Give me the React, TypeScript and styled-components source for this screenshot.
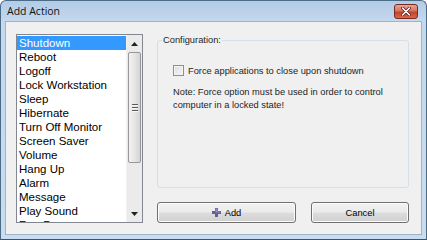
import styled, { createGlobalStyle } from "styled-components";

const GlobalStyle = createGlobalStyle`
  html, body { margin: 0; padding: 0; background: #ffffff; }
  body { font-family: "Liberation Sans", Arial, sans-serif; }
`;

const actions = [
  "Shutdown",
  "Reboot",
  "Logoff",
  "Lock Workstation",
  "Sleep",
  "Hibernate",
  "Turn Off Monitor",
  "Screen Saver",
  "Volume",
  "Hang Up",
  "Alarm",
  "Message",
  "Play Sound",
  "Run Program",
];

const Window = styled.div`
  box-sizing: border-box;
  width: 427px;
  height: 240px;
  display: flex;
  flex-direction: column;
  padding: 0 4px 4px 4px;
  border: 1px solid #4a6c86;
  border-bottom-color: #2e5a70;
  border-radius: 6px 6px 0 0;
  background: linear-gradient(to bottom, #b3cbe6 0px, #c4d8ee 20px, #c9dcf0 100%);
`;

const TitleBar = styled.div`
  height: 20px;
  display: flex;
  align-items: center;
  justify-content: space-between;
  padding-left: 2px;
`;

const Title = styled.span`
  font-family: "Open Sans", "Noto Sans", sans-serif;
  font-size: 10.5px;
  color: #111;
`;

const CloseButton = styled.div`
  width: 22px;
  height: 13px;
  margin-right: 4px;
  border: 1px solid #7a2a1e;
  border-radius: 3px;
  background: linear-gradient(to bottom, #e7a597 0%, #d5755f 45%, #c0432c 55%, #d8674c 100%);
  display: flex;
  align-items: center;
  justify-content: center;
`;

const Client = styled.div`
  flex: 1;
  display: flex;
  gap: 14px;
  padding: 12px 12px 11px 10px;
  background: #f0f0f0;
  border: 1px solid #9fb4cb;
`;

const ListBox = styled.div`
  box-sizing: border-box;
  width: 127px;
  height: 189px;
  display: flex;
  background: #ffffff;
  border: 1px solid #828790;
  overflow: hidden;
`;

const Items = styled.div`
  flex: 1;
  padding-top: 1px;
  overflow: hidden;
`;

const Item = styled.div<{ $selected?: boolean }>`
  height: 14px;
  line-height: 14px;
  padding-left: 2px;
  font-size: 11.5px;
  white-space: nowrap;
  color: ${(p) => (p.$selected ? "#ffffff" : "#000000")};
  background: ${(p) => (p.$selected ? "#3399ff" : "transparent")};
`;

const ScrollBar = styled.div`
  width: 15px;
  display: flex;
  flex-direction: column;
  background: #ebebeb;
  border-left: 1px solid #f2f2f2;
`;

const ArrowBox = styled.div`
  height: 17px;
  display: flex;
  align-items: center;
  justify-content: center;
`;

const Track = styled.div`
  flex: 1;
`;

const Thumb = styled.div`
  box-sizing: border-box;
  margin: 0 1px;
  border: 1px solid #979797;
  border-radius: 2px;
  background: linear-gradient(to right, #f2f2f2, #e6e6e6 50%, #d4d4d4);
  display: flex;
  flex-direction: column;
  align-items: center;
  justify-content: center;
  gap: 1px;
`;

const Grip = styled.div`
  width: 6px;
  height: 1px;
  background: #5a5a5a;
  border-bottom: 1px solid #f8f8f8;
`;

const RightColumn = styled.div`
  flex: 1;
  display: flex;
  flex-direction: column;
  justify-content: space-between;
  height: 189px;
`;

const GroupBox = styled.fieldset`
  margin: 0;
  padding: 0;
  height: 154px;
  box-sizing: border-box;
  border: 1px solid #d5dfe5;
  border-radius: 3px;
  font-size: 9.3px;
  color: #000;
`;

const Legend = styled.legend`
  margin-left: 4px;
  padding: 0 1px;
  line-height: 12px;
  color: #1e1e1e;
`;

const GroupBody = styled.div`
  padding: 19px 0 0 15px;
  display: flex;
  flex-direction: column;
  gap: 10px;
`;

const CheckRow = styled.label`
  display: flex;
  align-items: center;
  gap: 4px;
  color: #1e1e1e;
`;

const CheckBox = styled.span`
  box-sizing: border-box;
  width: 11px;
  height: 11px;
  border: 1px solid #8e8f8f;
  background: linear-gradient(135deg, #dcdcdc, #f6f6f6);
  box-shadow: inset 0 0 0 1px #f4f4f4;
`;

const Note = styled.p`
  margin: 0;
  line-height: 13px;
  color: #1e1e1e;
  width: 225px;
`;

const ButtonRow = styled.div`
  display: flex;
  gap: 15px;
  height: 21px;
`;

const Button = styled.button<{ $width?: number }>`
  box-sizing: border-box;
  ${(p) => (p.$width ? `width: ${p.$width}px;` : "flex: 1;")}
  height: 21px;
  padding: 0;
  border: 1px solid #707070;
  border-radius: 3px;
  background: linear-gradient(to bottom, #f2f2f2 0%, #ebebeb 48%, #dddddd 52%, #cfcfcf 100%);
  box-shadow: inset 0 0 0 1px #fcfcfc;
  font-family: "Liberation Sans", Arial, sans-serif;
  font-size: 9.3px;
  color: #000;
  display: flex;
  align-items: center;
  justify-content: center;
  gap: 4px;
`;

function CloseGlyph() {
  return (
    <svg width="10" height="9" viewBox="0 0 10 9">
      <path d="M1.5 1 L8.5 8 M8.5 1 L1.5 8" stroke="#5b1a12" strokeWidth="3" strokeLinecap="round" />
      <path d="M1.5 1 L8.5 8 M8.5 1 L1.5 8" stroke="#ffffff" strokeWidth="1.6" strokeLinecap="round" />
    </svg>
  );
}

function Arrow({ down }: { down?: boolean }) {
  return (
    <svg width="7" height="4" viewBox="0 0 7 4">
      <path d={down ? "M0 0 H7 L3.5 4 Z" : "M0 4 H7 L3.5 0 Z"} fill="#222" />
    </svg>
  );
}

function PlusIcon() {
  return (
    <svg width="9" height="9" viewBox="0 0 9 9">
      <path d="M3 0 H6 V3 H9 V6 H6 V9 H3 V6 H0 V3 H3 Z" fill="#6b5a9a" />
      <path d="M3.5 0.5 H5.5 V3.5 H8.5 V4.5 H3.5 Z" fill="#9a8cc4" />
    </svg>
  );
}

export default function App() {
  return (
    <>
      <GlobalStyle />
      <Window>
        <TitleBar>
          <Title>Add Action</Title>
          <CloseButton>
            <CloseGlyph />
          </CloseButton>
        </TitleBar>
        <Client>
          <ListBox>
            <Items>
              {actions.map((a, i) => (
                <Item key={a} $selected={i === 0}>
                  {a}
                </Item>
              ))}
            </Items>
            <ScrollBar>
              <ArrowBox>
                <Arrow />
              </ArrowBox>
              <Track>
                <Thumb style={{ height: 111 }}>
                  <Grip />
                  <Grip />
                  <Grip />
                </Thumb>
              </Track>
              <ArrowBox>
                <Arrow down />
              </ArrowBox>
            </ScrollBar>
          </ListBox>
          <RightColumn>
            <GroupBox>
              <Legend>Configuration:</Legend>
              <GroupBody>
                <CheckRow>
                  <CheckBox />
                  Force applications to close upon shutdown
                </CheckRow>
                <Note>
                  Note: Force option must be used in order to control computer in a locked state!
                </Note>
              </GroupBody>
            </GroupBox>
            <ButtonRow>
              <Button $width={139}>
                <PlusIcon />
                Add
              </Button>
              <Button>Cancel</Button>
            </ButtonRow>
          </RightColumn>
        </Client>
      </Window>
    </>
  );
}
